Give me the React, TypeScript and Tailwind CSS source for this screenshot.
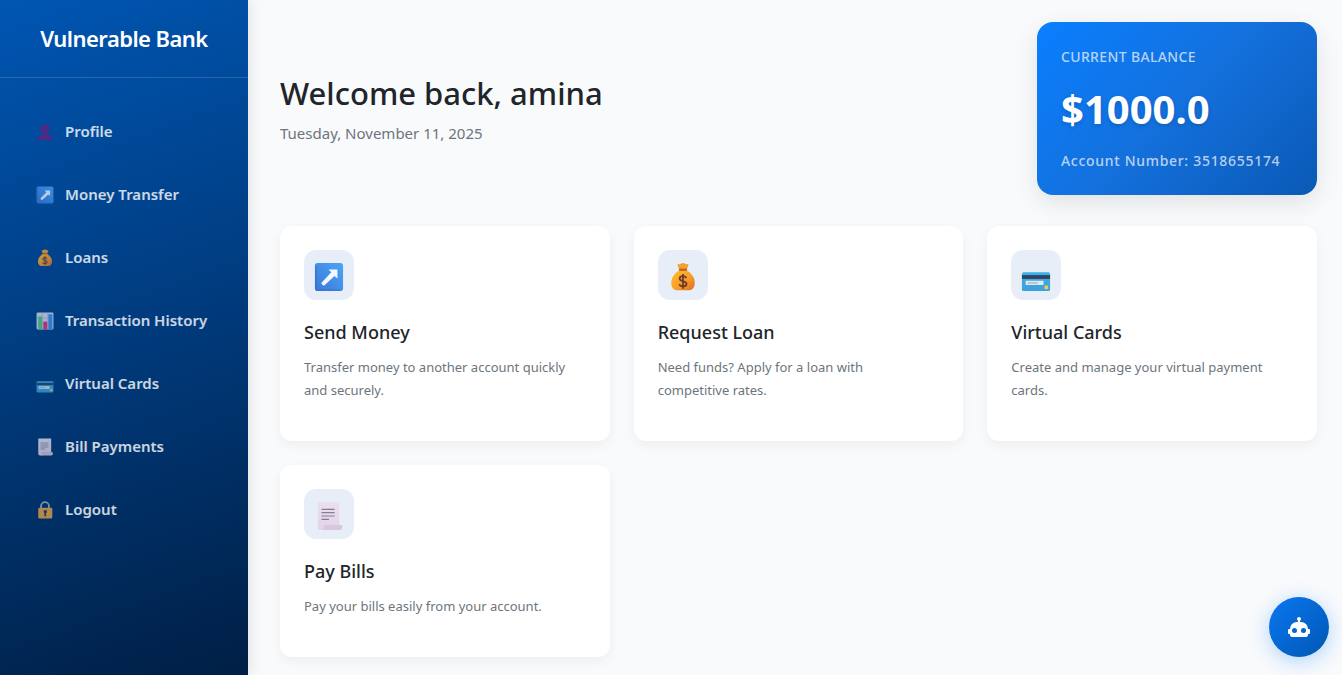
import type { ReactNode } from 'react';

type IconProps = { className?: string };

function ProfileIcon({ className }: IconProps) {
  return (
    <svg viewBox="0 0 32 32" className={className} aria-hidden="true">
      <path
        d="M16 2c-5 0-8 3.200-8 8 0 3.600 1.600 6.400 4 8v3L5 24c-2 1-3 3-3 6h28c0-3-1-5-3-6l-7-3v-3c2.400-1.600 4-4.400 4-8 0-4.800-3-8-8-8z"
        fill="#6a1f7c"
      />
      <path d="M16 6c3 0 5 2 5 6s-2 6-5 6z" fill="#43307f" opacity=".6" />
    </svg>
  );
}

function ArrowIcon({ className }: IconProps) {
  return (
    <svg viewBox="0 0 32 32" className={className} aria-hidden="true">
      <defs>
        <linearGradient id="arrowTile" x1="1" y1="0" x2="0" y2="1">
          <stop offset="0" stopColor="#4ba6f5" />
          <stop offset="1" stopColor="#3b78d8" />
        </linearGradient>
      </defs>
      <rect x="1" y="1" width="30" height="30" rx="3" fill="url(#arrowTile)" />
      <path d="M2 4v24a2 2 0 0 0 2 2h24" fill="none" stroke="#3569c4" strokeWidth="1.500" opacity=".6" />
      <path
        d="M15.500 8H25v9.500l-3.200-2.500L11.500 24.500a1.500 1.500 0 0 1-2.200 0l-.8-.8a1.500 1.500 0 0 1 0-2.200L18.500 11z"
        fill="#f6f8ff"
      />
    </svg>
  );
}

function MoneyBagIcon({ className }: IconProps) {
  return (
    <svg viewBox="0 0 32 32" className={className} aria-hidden="true">
      <defs>
        <linearGradient id="bagFill" x1="0" y1="0" x2="1" y2="1">
          <stop offset="0" stopColor="#ffc02e" />
          <stop offset=".6" stopColor="#f79a26" />
          <stop offset="1" stopColor="#dd6b2c" />
        </linearGradient>
      </defs>
      <path d="M11 2c2 1 3-1 5-1s3 2 5 1c1 0 1 1 .6 2L19.500 9h-7L10.400 4C10 3 10 2 11 2z" fill="#f3a02c" />
      <path
        d="M12 9h8c5 3 8.500 7.500 8.500 13 0 5-2.500 8-6 8h-13c-3.500 0-6-3-6-8C3.500 16.500 7 12 12 9z"
        fill="url(#bagFill)"
      />
      <rect x="11.500" y="7" width="9" height="2.500" rx="1.200" fill="#c8642a" />
      <path
        d="M19.500 17.200c-.5-1.500-1.800-2.200-3.500-2.200-2.100 0-3.600 1-3.600 2.700 0 3.900 7.400 1.800 7.400 5.600 0 1.700-1.600 2.800-3.800 2.800-2 0-3.500-.9-3.900-2.500M16 12.700v15.700"
        fill="none"
        stroke="#6c3a2c"
        strokeWidth="1.900"
      />
    </svg>
  );
}

function ChartIcon({ className }: IconProps) {
  return (
    <svg viewBox="0 0 32 32" className={className} aria-hidden="true">
      <rect x="1" y="1" width="30" height="30" rx="2" fill="#dcd9ee" />
      <path d="M1 11h30M1 21h30M11 1v30M21 1v30" stroke="#aaa6cc" />
      <rect x="4" y="8" width="7" height="23" fill="#58c979" />
      <rect x="13" y="17" width="7" height="14" fill="#e2317a" />
      <rect x="22" y="4" width="7" height="27" fill="#3e8fe8" />
    </svg>
  );
}

function CreditCardIcon({ className }: IconProps) {
  return (
    <svg viewBox="0 0 32 32" className={className} aria-hidden="true">
      <defs>
        <linearGradient id="cardFill" x1="0" y1="0" x2="0" y2="1">
          <stop offset="0" stopColor="#36b2e8" />
          <stop offset="1" stopColor="#3d9fdc" />
        </linearGradient>
      </defs>
      <rect x="1" y="11" width="30" height="20" rx="2" fill="url(#cardFill)" />
      <rect x="1" y="14" width="30" height="4" fill="#36405c" />
      <rect x="5" y="20" width="19" height="4.500" fill="#e4e9f3" />
      <path d="M7 22.300h11" stroke="#b1b9ba" strokeWidth="1.500" />
      <rect x="25" y="25" width="4" height="4" rx="1" fill="#f2cb4b" />
    </svg>
  );
}

function ReceiptIcon({ className }: IconProps) {
  return (
    <svg viewBox="0 0 32 32" className={className} aria-hidden="true">
      <defs>
        <linearGradient id="paperFill" x1="0" y1="0" x2="0" y2="1">
          <stop offset="0" stopColor="#e9e1ef" />
          <stop offset="1" stopColor="#e3d3e6" />
        </linearGradient>
      </defs>
      <path d="M4 1h23v25H11v5H7a3 3 0 0 1-3-3z" fill="url(#paperFill)" />
      <path d="M11 25.500h19v2.500a3 3 0 0 1-3 3H8.500c1.700-.8 2.500-2.500 2.500-5.500z" fill="#d9c6df" />
      <path d="M8 9h14M8 12.500h14M8 16h14M8 19.500h8" stroke="#857c96" strokeWidth="1.300" />
    </svg>
  );
}

function LockIcon({ className }: IconProps) {
  return (
    <svg viewBox="0 0 32 32" className={className} aria-hidden="true">
      <path d="M9 14V9a7 7 0 0 1 14 0v5" fill="none" stroke="#9fb0c8" strokeWidth="3.200" />
      <rect x="4" y="12" width="25" height="19" rx="2" fill="#e8a848" />
      <path d="M16.500 16a3 3 0 0 0-1.500 5.600V27h3v-5.400a3 3 0 0 0-1.500-5.600z" fill="#3b3340" />
    </svg>
  );
}

function RobotIcon({ className }: IconProps) {
  return (
    <svg viewBox="0 0 24 24" className={className} fill="currentColor" aria-hidden="true">
      <path d="M12 2a2 2 0 0 1 2 2c0 .74-.4 1.390-1 1.730V7h1a7 7 0 0 1 7 7h1a1 1 0 0 1 1 1v3a1 1 0 0 1-1 1h-1v1a2 2 0 0 1-2 2H5a2 2 0 0 1-2-2v-1H2a1 1 0 0 1-1-1v-3a1 1 0 0 1 1-1h1a7 7 0 0 1 7-7h1V5.730c-.6-.34-1-.99-1-1.730a2 2 0 0 1 2-2M7.500 13A2.500 2.500 0 0 0 5 15.500 2.500 2.500 0 0 0 7.500 18a2.500 2.500 0 0 0 2.500-2.500A2.500 2.500 0 0 0 7.500 13m9 0a2.500 2.500 0 0 0-2.500 2.500 2.500 2.500 0 0 0 2.500 2.500 2.500 2.500 0 0 0 2.500-2.500 2.500 2.500 0 0 0-2.500-2.500z" />
    </svg>
  );
}

type Item = { label: string; href: string; icon: ReactNode };

const navItems: Item[] = [
  { label: 'Profile', href: '#profile', icon: <ProfileIcon className="size-[18px]" /> },
  { label: 'Money Transfer', href: '#transfer', icon: <ArrowIcon className="size-[18px]" /> },
  { label: 'Loans', href: '#loans', icon: <MoneyBagIcon className="size-[18px]" /> },
  { label: 'Transaction History', href: '#transactions', icon: <ChartIcon className="size-[18px]" /> },
  { label: 'Virtual Cards', href: '#virtual-cards', icon: <CreditCardIcon className="size-[18px]" /> },
  { label: 'Bill Payments', href: '#bills', icon: <ReceiptIcon className="size-[18px]" /> },
  { label: 'Logout', href: '#logout', icon: <LockIcon className="size-[18px]" /> },
];

const actions = [
  {
    title: 'Send Money',
    description: 'Transfer money to another account quickly and securely.',
    href: '#transfer',
    icon: <ArrowIcon className="size-[30px]" />,
  },
  {
    title: 'Request Loan',
    description: 'Need funds? Apply for a loan with competitive rates.',
    href: '#loans',
    icon: <MoneyBagIcon className="size-[30px]" />,
  },
  {
    title: 'Virtual Cards',
    description: 'Create and manage your virtual payment cards.',
    href: '#virtual-cards',
    icon: <CreditCardIcon className="size-[30px]" />,
  },
  {
    title: 'Pay Bills',
    description: 'Pay your bills easily from your account.',
    href: '#bills',
    icon: <ReceiptIcon className="size-[30px]" />,
  },
];

function Sidebar() {
  return (
    <aside className="sticky top-0 h-screen w-62 shrink-0 bg-[linear-gradient(160deg,#0056b3_0%,#001f45_100%)] shadow-[4px_0_12px_rgba(0,0,0,0.08)]">
      <div className="border-b border-white/15 py-5 text-center">
        <h2 className="text-[22px] leading-[37px] font-semibold tracking-tight text-white">Vulnerable Bank</h2>
      </div>
      <nav className="mt-7 flex flex-col gap-3">
        {navItems.map((item) => (
          <a
            key={item.label}
            href={item.href}
            className="flex h-[51px] items-center gap-[11px] pl-9 text-[15px] font-semibold text-white/80"
          >
            <span className="opacity-75">{item.icon}</span>
            {item.label}
          </a>
        ))}
      </nav>
    </aside>
  );
}

function BalanceCard() {
  return (
    <section className="w-70 rounded-2xl bg-[linear-gradient(135deg,#0a7fff_0%,#1470dc_50%,#0a59b5_100%)] p-6 text-white shadow-[0_8px_24px_rgba(0,0,0,0.10)]">
      <p className="text-[14px] leading-[22px] font-medium tracking-wide text-white/70 uppercase">Current Balance</p>
      <p className="my-3 text-[40px] leading-[58px] font-bold [text-shadow:0_2px_4px_rgba(0,0,0,0.15)]">$1000.0</p>
      <p className="text-[14px] leading-[21px] font-medium tracking-wider text-white/70">
        Account Number: 3518655174
      </p>
    </section>
  );
}

export default function App() {
  return (
    <div className="flex min-h-screen bg-[#f8fafc] font-['Noto_Sans','Open_Sans',sans-serif]">
      <Sidebar />

      <main className="flex-1 pt-[22px] pr-[25px] pb-4 pl-8">
        <header className="flex items-center justify-between">
          <div>
            <h1 className="text-[31px] leading-[46px] font-medium text-[#212529]">Welcome back, amina</h1>
            <p className="mt-[3px] text-[15px] leading-[28px] text-[#6c757d]">Tuesday, November 11, 2025</p>
          </div>
          <BalanceCard />
        </header>

        <div className="mt-[31px] grid grid-cols-3 gap-6">
          {actions.map((action) => (
            <a
              key={action.title}
              href={action.href}
              className="rounded-xl bg-white px-6 pt-6 pb-[39px] shadow-[0_4px_12px_rgba(0,0,0,0.05)]"
            >
              <div className="flex size-[50px] items-center justify-center rounded-xl bg-[#e7eef8] pt-1">
                {action.icon}
              </div>
              <h3 className="mt-5 text-[18px] leading-[24px] font-medium text-[#212529]">{action.title}</h3>
              <p className="mt-3 pr-2 text-[13px] leading-[23px] text-[#6c757d]">{action.description}</p>
            </a>
          ))}
        </div>
      </main>

      {/* Chat assistant */}
      <button
        type="button"
        aria-label="Open chat"
        className="fixed right-[13px] bottom-[18px] flex size-15 items-center justify-center rounded-full bg-[linear-gradient(135deg,#0a78f0_0%,#0056b3_100%)] text-white shadow-[0_4px_20px_rgba(0,123,255,0.3)]"
      >
        <RobotIcon className="size-6" />
      </button>
    </div>
  );
}
